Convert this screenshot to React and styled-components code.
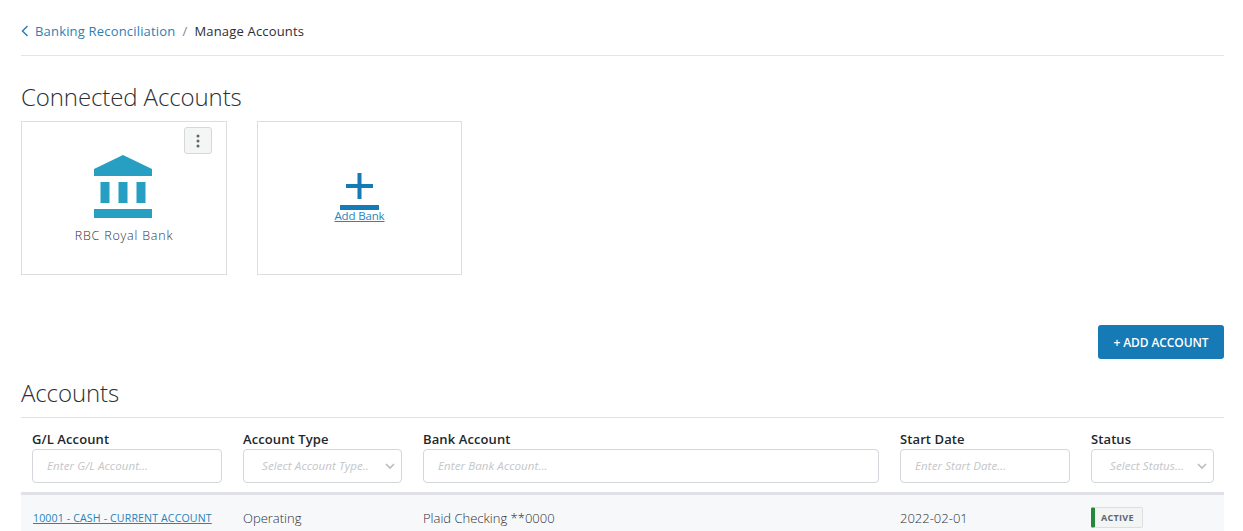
import React from "react";
import styled, { createGlobalStyle } from "styled-components";

const Global = createGlobalStyle`
  html, body { margin: 0; padding: 0; background: #fff; overflow: hidden; }
  body { font-family: "Open Sans", "Noto Sans", "Liberation Sans", sans-serif; color: #212529; }
  * { box-sizing: border-box; }
`;
const Page = styled.div`
  width: 1243px; height: 531px; padding: 0 19px 0 21px; overflow: hidden;
`;
const Breadcrumb = styled.nav`
  height: 56px; padding-top: 21px; border-bottom: 1px solid #e3e5e8;
  display: flex; align-items: flex-start; font-size: 13px; line-height: 20px; letter-spacing: 0.18px;
`;
const Crumb = styled.a`
  color: #2c7fb5; display: flex; align-items: center; text-decoration: none;
  svg { margin-right: 6px; }
`;
const Sep = styled.span` color: #7d868e; margin: 0 7px; `;
const Current = styled.span` color: #2b2f33; `;
const Title = styled.h2`
  margin: 0; font-weight: 300; font-size: 24px; line-height: 32px; color: #2b3035; letter-spacing: -0.1px;
`;
const ConnectedTitle = styled(Title)` margin-top: 25px; height: 40px; `;
const Cards = styled.div` display: flex; gap: 30px; `;
const Card = styled.div`
  position: relative; width: ${p => p.$w}px; height: 154px; border: 1px solid #dcdee0;
  display: flex; flex-direction: column; align-items: center; padding-top: ${p => p.$pt}px;
`;
const Kebab = styled.button`
  position: absolute; top: 5px; right: 14px; width: 28px; height: 27px; padding: 0;
  background: #f4f5f5; border: 1px solid #d6d8da; border-radius: 3px;
  display: flex; align-items: center; justify-content: center;
`;
const BankIcon = styled.svg` margin-right: 3px; `;
const BankName = styled.div`
  margin-top: 9px; font-size: 12.5px; line-height: 18px; color: #2f3439; letter-spacing: 0.8px; font-weight: 300;
`;
const AddLink = styled.a`
  font-size: 11.5px; line-height: 12px; margin-top: -1px; color: #2c84b8; text-decoration: underline; letter-spacing: -0.15px;
`;
const ButtonRow = styled.div` display: flex; justify-content: flex-end; margin-top: 50px; `;
const AddButton = styled.button`
  width: 126px; height: 34px; background: #157ab5; color: #fff; border: 0; border-radius: 3px;
  font-family: inherit; font-size: 12px; font-weight: 600; letter-spacing: -0.1px; padding: 0;
`;
const AccountsTitle = styled(Title)` height: 42px; margin-top: 17px; border-bottom: 1px solid #e0e2e5; line-height: 34px; `;
const Grid = styled.div`
  display: grid; grid-template-columns: 190px 159px 456px 170px 123px; column-gap: 21px;
  padding: 0 10px 0 11px;
`;
const Header = styled(Grid)` height: 74px; padding-top: 11px; `;
const Field = styled.div` display: flex; flex-direction: column; `;
const Label = styled.label`
  font-size: 13px; line-height: 20px; font-weight: 600; color: #23272b; height: 20px; letter-spacing: 0.1px;
`;
const FilterBox = styled.div`
  height: 34px; border: 1px solid #d3d6da; border-radius: 4px; background: #fff;
  display: flex; align-items: center; justify-content: space-between;
  padding: ${p => (p.$select ? "0 4px 2px 18px" : "0 0 2px 14px")};
  font-size: 11.5px; font-style: italic; color: #c3c6ca; letter-spacing: 0.1px; white-space: nowrap; overflow: hidden;
`;
const Row = styled(Grid)`
  height: 50px; background: #f7f8fa; border-top: 3px solid #e0e2e7; align-items: center;
  font-size: 13px; color: #2b3035; font-weight: 300; padding-bottom: 4px; padding-top: 2px;
`;
const AccountLink = styled.a`
  font-size: 10.6px; color: #2583ba; text-decoration: underline; white-space: nowrap; font-weight: 400; margin-left: 1px; letter-spacing: 0.13px;
`;
const StatusTag = styled.span`
  display: inline-flex; align-items: center; width: 52px; height: 21px; margin-top: -3px;
  background: #f3f4f4; border: 1px solid #dcdee0; border-left: 4px solid #23883a; border-radius: 2px;
  padding-left: 6px; font-size: 9px; font-weight: 700; color: #5d6670; letter-spacing: 0.3px;
`;

const Chevron = () => (
  <svg width="14" height="14" viewBox="0 0 14 14" fill="none" stroke="#b9bdc2" strokeWidth="1.6"><path d="M3 6l4 4 4-4" /></svg>
);
const Filter = ({ label, placeholder, select }) => (
  <Field>
    <Label>{label}</Label>
    <FilterBox $select={select}>
      {placeholder}
      {select && <Chevron />}
    </FilterBox>
  </Field>
);

export default function App() {
  return (
    <Page>
      <Global />
      <Breadcrumb>
        <Crumb href="#">
          <svg width="8" height="12" viewBox="0 0 8 12" fill="none" stroke="#2c7fb5" strokeWidth="1.5"><path d="M6.5 1L1.5 6l5 5" /></svg>
          Banking Reconciliation
        </Crumb>
        <Sep>/</Sep>
        <Current>Manage Accounts</Current>
      </Breadcrumb>
      <ConnectedTitle>Connected Accounts</ConnectedTitle>
      <Cards>
        <Card $w={206} $pt={33}>
          <Kebab aria-label="More">
            <svg width="4" height="14" viewBox="0 0 4 14" fill="#5f666d"><circle cx="2" cy="2" r="1.5" /><circle cx="2" cy="7" r="1.5" /><circle cx="2" cy="12" r="1.5" /></svg>
          </Kebab>
          <BankIcon width="58" height="63" viewBox="0 0 58 63" fill="#269fc2">
            <path d="M0 14 L29 0 L58 14 V21 H0 Z" />
            <rect x="6.5" y="27" width="9" height="21" />
            <rect x="24.5" y="27" width="9" height="21" />
            <rect x="42.5" y="27" width="9" height="21" />
            <rect x="0" y="54" width="58" height="9" />
          </BankIcon>
          <BankName>RBC Royal Bank</BankName>
        </Card>
        <Card $w={205} $pt={51}>
          <svg width="39" height="38" viewBox="0 0 39 38" fill="#157ab5">
            <rect x="6" y="11" width="27" height="4" />
            <rect x="17.5" y="0" width="4" height="26" />
            <rect x="0" y="32" width="39" height="5" />
          </svg>
          <AddLink href="#">Add Bank</AddLink>
        </Card>
      </Cards>
      <ButtonRow>
        <AddButton>+ ADD ACCOUNT</AddButton>
      </ButtonRow>
      <AccountsTitle>Accounts</AccountsTitle>
      <Header>
        <Filter label="G/L Account" placeholder="Enter G/L Account..." />
        <Filter label="Account Type" placeholder="Select Account Type.." select />
        <Filter label="Bank Account" placeholder="Enter Bank Account..." />
        <Filter label="Start Date" placeholder="Enter Start Date..." />
        <Filter label="Status" placeholder="Select Status..." select />
      </Header>
      <Row>
        <AccountLink href="#">10001 - CASH - CURRENT ACCOUNT</AccountLink>
        <span>Operating</span>
        <span>Plaid Checking **0000</span>
        <span>2022-02-01</span>
        <span><StatusTag>ACTIVE</StatusTag></span>
      </Row>
    </Page>
  );
}
